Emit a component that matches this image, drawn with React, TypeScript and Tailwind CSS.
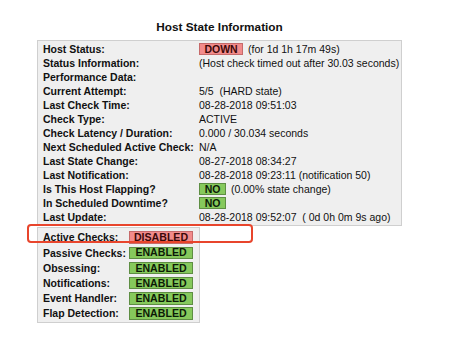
import React from 'react';

type Row = { label: string; value?: React.ReactNode };

const Badge = ({ text, tone, className = '' }: { text: string; tone: 'bad' | 'good'; className?: string }) => (
  <span
    className={`inline-flex items-center justify-center h-[11.5px] border font-bold leading-none ${
      tone === 'bad'
        ? 'bg-[#f28b8b] border-[#c66a6a] text-[#3a0808]'
        : 'bg-[#86c95c] border-[#5e8e43] text-[#0c1a06]'
    } ${className}`}
  >
    {text}
  </span>
);

const hostRows: Row[] = [
  {
    label: 'Host Status:',
    value: (
      <>
        <Badge text="DOWN" tone="bad" className="w-[44px]" />
        <span className="ml-[5px]">(for 1d 1h 17m 49s)</span>
      </>
    ),
  },
  { label: 'Status Information:', value: '(Host check timed out after 30.03 seconds)' },
  { label: 'Performance Data:' },
  { label: 'Current Attempt:', value: '5/5\u00a0\u00a0(HARD state)' },
  { label: 'Last Check Time:', value: '08-28-2018 09:51:03' },
  { label: 'Check Type:', value: 'ACTIVE' },
  { label: 'Check Latency / Duration:', value: '0.000 / 30.034 seconds' },
  { label: 'Next Scheduled Active Check:', value: 'N/A' },
  { label: 'Last State Change:', value: '08-27-2018 08:34:27' },
  { label: 'Last Notification:', value: '08-28-2018 09:23:11 (notification 50)' },
  {
    label: 'Is This Host Flapping?',
    value: (
      <>
        <Badge text="NO" tone="good" className="w-[27px]" />
        <span className="ml-[5px]">(0.00% state change)</span>
      </>
    ),
  },
  { label: 'In Scheduled Downtime?', value: <Badge text="NO" tone="good" className="w-[27px]" /> },
  { label: 'Last Update:', value: '08-28-2018 09:52:07\u00a0\u00a0( 0d 0h 0m 9s ago)' },
];

const featureRows: { label: string; enabled: boolean }[] = [
  { label: 'Active Checks:', enabled: false },
  { label: 'Passive Checks:', enabled: true },
  { label: 'Obsessing:', enabled: true },
  { label: 'Notifications:', enabled: true },
  { label: 'Event Handler:', enabled: true },
  { label: 'Flap Detection:', enabled: true },
];

export default function App() {
  return (
    <div
      className="w-[474px] h-[340px] bg-white text-[#111] pt-[19px] pl-[37px] relative"
      style={{ fontFamily: '"Liberation Sans", Arial, Helvetica, sans-serif' }}
    >
      <div className="w-[365px] text-center text-[11.8px] font-bold leading-[16px]">Host State Information</div>

      {/* host state table */}
      <div className="mt-[5px] w-[365px] bg-[#efefef] border border-[#cfcfcf] pl-[5px] pt-[1px] pb-[1px]">
        {hostRows.map(r => (
          <div key={r.label} className="flex items-center h-[14px] text-[10.5px] leading-none">
            <div className="w-[156px] shrink-0 font-bold">{r.label}</div>
            <div className="flex items-center whitespace-nowrap">{r.value}</div>
          </div>
        ))}
      </div>

      {/* feature toggles */}
      <div className="mt-[1px] w-[163px] bg-[#efefef] border border-[#cfcfcf] pl-[5px] pt-[2px] pb-[1px]">
        {featureRows.map(r => (
          <div key={r.label} className="flex items-center h-[15.2px] text-[10.5px] leading-none">
            <div className="w-[86px] shrink-0 font-bold">{r.label}</div>
            <Badge
              text={r.enabled ? 'ENABLED' : 'DISABLED'}
              tone={r.enabled ? 'good' : 'bad'}
              className="w-[64px] h-[12.5px] text-[10.6px]"
            />
          </div>
        ))}
      </div>

      {/* highlight annotation */}
      <div className="absolute left-[27px] top-[224px] w-[226px] h-[19px] border-2 border-[#e8452c] rounded-[4px]" />
    </div>
  );
}
